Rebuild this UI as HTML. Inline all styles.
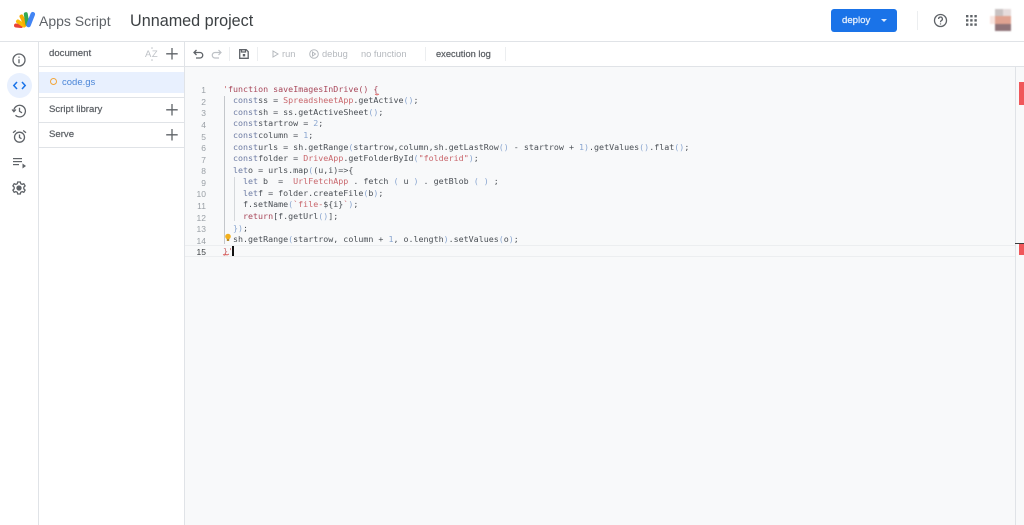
<!DOCTYPE html>
<html><head><meta charset="utf-8">
<style>
html,body{margin:0;padding:0;background:#fff}
#p{position:relative;width:1024px;height:525px;overflow:hidden;background:#fff;font-family:"Liberation Sans",sans-serif;color:#3c4043;filter:blur(.3px)}
.a{position:absolute;white-space:pre}
.b{position:absolute;background:#e0e3e7}
.l{position:absolute;left:0;font-family:"DejaVu Sans Mono",monospace;font-size:8.34px;line-height:12px;white-space:pre;color:#4a4f55}
.n{position:absolute;width:20px;text-align:right;left:186px;font-family:"Liberation Sans",sans-serif;font-size:8.5px;line-height:12px;color:#9aa0a6}
.k{color:#6d7ba3}.s{color:#c9666c}.p{color:#8aa6d0}.f{color:#a8475a}
.t{font-size:9.6px;color:#5f6368;-webkit-text-stroke:.25px #5f6368}
svg{position:absolute;overflow:visible}
</style></head><body><div id="p">

<!-- header -->
<svg style="left:14px;top:11px" width="22" height="18" viewBox="0 0 22 18" fill="none" stroke-linecap="round">
<path d="M2 14.500 L7 15" stroke="#ea4335" stroke-width="4"/>
<path d="M4 10.500 L10 14.500" stroke="#fbbc04" stroke-width="4"/>
<path d="M7.500 5.500 L11.500 13.500" stroke="#f9ab00" stroke-width="4"/>
<path d="M11.800 3.200 L13.300 13" stroke="#34a853" stroke-width="4"/>
<path d="M18.800 3.200 L14.500 14" stroke="#4285f4" stroke-width="4.600"/>
</svg>
<div class="a" style="left:39px;top:12px;font-size:14px;line-height:18px;color:#5f6368">Apps Script</div>
<div class="a" style="left:130px;top:11px;font-size:16.2px;line-height:20px;color:#3c4043">Unnamed project</div>
<div class="a" style="left:831px;top:9px;width:66px;height:23px;background:#1a73e8;border-radius:3px"></div>
<div class="a" style="left:842px;top:14px;font-size:9.600px;line-height:13px;color:#e3eefc;-webkit-text-stroke:.3px #e3eefc">deploy</div>
<div class="a" style="left:881px;top:19px;width:0;height:0;border-left:3.500px solid transparent;border-right:3.500px solid transparent;border-top:3.500px solid #e3eefc"></div>
<div class="b" style="left:917px;top:11px;width:1px;height:19px;background:#eceef0"></div>
<svg style="left:933px;top:13px" width="15" height="15" viewBox="0 0 15 15" fill="none" stroke="#5f6368" stroke-width="1.300"><circle cx="7.500" cy="7.500" r="6"/><path d="M5.600 6 A1.900 1.900 0 1 1 8.400 7.600 C7.700 8 7.500 8.400 7.500 9.200"/><path d="M7.500 10.400v1.100"/></svg>
<svg style="left:966px;top:15px" width="11" height="11" viewBox="0 0 11 11" fill="#5f6368"><rect x="0" y="0" width="2.400" height="2.400"/><rect x="4.200" y="0" width="2.400" height="2.400"/><rect x="8.400" y="0" width="2.400" height="2.400"/><rect x="0" y="4.200" width="2.400" height="2.400"/><rect x="4.200" y="4.200" width="2.400" height="2.400"/><rect x="8.400" y="4.200" width="2.400" height="2.400"/><rect x="0" y="8.400" width="2.400" height="2.400"/><rect x="4.200" y="8.400" width="2.400" height="2.400"/><rect x="8.400" y="8.400" width="2.400" height="2.400"/></svg>
<div class="a" style="left:990px;top:9px;width:21px;height:22px;filter:blur(.7px)">
<div class="a" style="left:5px;top:0;width:8px;height:7px;background:#c9c2c2"></div><div class="a" style="left:13px;top:0;width:8px;height:7px;background:#e6dcdc"></div>
<div class="a" style="left:0;top:7px;width:5px;height:8px;background:#f8e6e1"></div><div class="a" style="left:5px;top:7px;width:16px;height:8px;background:#e0a391"></div>
<div class="a" style="left:5px;top:15px;width:16px;height:7px;background:#8f7378"></div></div>
<div class="b" style="left:0;top:41px;width:1024px;height:1px"></div>

<!-- left rail -->
<div class="b" style="left:38px;top:42px;width:1px;height:483px"></div>
<div class="a" style="left:7px;top:73px;width:25px;height:25px;border-radius:50%;background:#e8f0fe"></div>
<svg style="left:12px;top:53px" width="14" height="14" viewBox="0 0 14 14" fill="none" stroke="#5f6368" stroke-width="1.300"><circle cx="7" cy="7" r="6"/><path d="M7 6.200v4M7 3.600v1.200"/></svg>
<svg style="left:12px;top:80px" width="15" height="11" viewBox="0 0 15 11" fill="none" stroke="#1a73e8" stroke-width="1.500"><path d="M5 2 1.800 5.500 5 9M10 2l3.200 3.500L10 9"/></svg>
<svg style="left:12px;top:104px" width="15" height="14" viewBox="0 0 15 14" fill="none" stroke="#5f6368" stroke-width="1.300"><path d="M1.800 7 A5.800 5.800 0 1 1 3.500 11.200"/><path d="M0 5.500 1.900 7.800 4 5.500" stroke-width="1.100"/><path d="M7.500 3.800V7.300l2.500 1.500"/></svg>
<svg style="left:12px;top:129px" width="15" height="15" viewBox="0 0 15 15" fill="none" stroke="#5f6368" stroke-width="1.300"><circle cx="7.500" cy="8.200" r="5"/><path d="M7.500 5.500v3l2 1.200M1 3.800 3.800 1.500M14 3.800 11.200 1.500"/></svg>
<svg style="left:13px;top:157px" width="14" height="12" viewBox="0 0 14 12" fill="#5f6368"><rect x="0" y="1" width="9" height="1.200"/><rect x="0" y="4" width="9" height="1.200"/><rect x="0" y="7" width="6" height="1.200"/><path d="M9.500 6.500v5l3.500-2.500z"/></svg>
<svg style="left:12px;top:181px" width="14" height="14" viewBox="0 0 14 14" fill="none" stroke="#5f6368" stroke-width="1.300"><path d="M5.700 1h2.600l.4 1.700 1.500.7 1.600-.7 1.300 2.200-1.300 1.200v1.800l1.300 1.200-1.300 2.200-1.600-.7-1.500.7L8.300 13H5.700l-.4-1.700-1.500-.7-1.600.7L.9 9.100l1.300-1.200V6.100L.9 4.900l1.300-2.200 1.600.7 1.500-.7z"/><circle cx="7" cy="7" r="2" fill="#5f6368"/></svg>

<!-- file panel -->
<div class="b" style="left:184px;top:42px;width:1px;height:483px"></div>
<div class="a t" style="left:49px;top:47px;line-height:13px">document</div>
<div class="a" style="left:145px;top:48px;font-size:9.500px;line-height:13px;color:#bdc1c6;letter-spacing:.6px">AZ</div>
<svg style="left:151px;top:47px" width="3" height="15" fill="#bdc1c6"><circle cx="1" cy="1" r=".8"/><circle cx="1" cy="13" r=".8"/></svg>
<svg style="left:166px;top:48px" width="12" height="12" stroke="#5f6368" stroke-width="1.300"><path d="M6 0v11.500M.2 5.800h11.500"/></svg>
<div class="b" style="left:39px;top:66px;width:145px;height:1px"></div>
<div class="a" style="left:39px;top:72px;width:145px;height:21px;background:#e8f0fe"></div>
<div class="a" style="left:49.500px;top:78px;width:5px;height:5px;border:1.300px solid #f2a63c;border-radius:50%"></div>
<div class="a" style="left:62px;top:76px;font-size:9.500px;line-height:13px;color:#4b86d8">code.gs</div>
<div class="b" style="left:39px;top:97px;width:145px;height:1px"></div>
<div class="a t" style="left:49px;top:103px;line-height:13px">Script library</div>
<svg style="left:166px;top:104px" width="12" height="12" stroke="#5f6368" stroke-width="1.300"><path d="M6 0v11.500M.2 5.800h11.500"/></svg>
<div class="b" style="left:39px;top:122px;width:145px;height:1px"></div>
<div class="a t" style="left:49px;top:128px;line-height:13px">Serve</div>
<svg style="left:166px;top:129px" width="12" height="12" stroke="#5f6368" stroke-width="1.300"><path d="M6 0v11.500M.2 5.800h11.500"/></svg>
<div class="b" style="left:39px;top:147px;width:145px;height:1px"></div>

<!-- toolbar -->
<svg style="left:193px;top:49px" width="11" height="10" fill="none" stroke="#5f6368" stroke-width="1.300"><path d="M1 3.500h6a2.700 2.700 0 0 1 0 5.500H3M3.500 1 1 3.500 3.500 6"/></svg>
<svg style="left:211px;top:49px" width="11" height="10" fill="none" stroke="#bdc1c6" stroke-width="1.200"><path d="M10 3.500H4a2.700 2.700 0 0 0 0 5.500h4M7.500 1 10 3.500 7.500 6"/></svg>
<div class="b" style="left:229px;top:47px;width:1px;height:14px;background:#eceef0"></div>
<svg style="left:239px;top:49px" width="10" height="10" fill="none" stroke="#5f6368" stroke-width="1.300"><path d="M.7.700h6.500l2 2v6.600H.700z"/><path d="M2.500 1v2h4V1"/><rect x="3.800" y="5" width="2.400" height="2.400" fill="#5f6368" stroke="none"/></svg>
<div class="b" style="left:257px;top:47px;width:1px;height:14px;background:#eceef0"></div>
<svg style="left:272px;top:50px" width="7" height="8" fill="none" stroke="#b5b9be" stroke-width="1"><path d="M1 1v6l5-3z"/></svg>
<div class="a" style="left:282px;top:48px;font-size:9.300px;line-height:13px;color:#b5b9be">run</div>
<svg style="left:309px;top:49px" width="10" height="10" fill="none" stroke="#b5b9be" stroke-width="1"><circle cx="5" cy="5" r="4.300"/><path d="M3.500 3v4l3-2z"/></svg>
<div class="a" style="left:322px;top:48px;font-size:9.300px;line-height:13px;color:#b5b9be">debug</div>
<div class="a" style="left:361px;top:48px;font-size:9.300px;line-height:13px;color:#b5b9be">no function</div>
<div class="b" style="left:425px;top:47px;width:1px;height:14px;background:#eceef0"></div>
<div class="a" style="left:436px;top:48px;font-size:9.300px;line-height:13px;color:#5f6368;-webkit-text-stroke:.25px #5f6368">execution log</div>
<div class="b" style="left:505px;top:47px;width:1px;height:14px;background:#eceef0"></div>
<div class="b" style="left:185px;top:66px;width:839px;height:1px"></div>

<!-- editor -->
<div class="a" style="left:185px;top:67px;width:839px;height:458px;background:#f8f9fa"></div>
<div class="b" style="left:1015px;top:67px;width:1px;height:458px"></div>
<div class="a" style="left:1019px;top:82px;width:5px;height:23px;background:#f0575a"></div>
<div class="a" style="left:1019px;top:243px;width:5px;height:12px;background:#f0575a"></div>
<div class="a" style="left:1015px;top:243px;width:9px;height:1px;background:#3c3c3c"></div>
<div class="a" style="left:185px;top:245px;width:830px;height:10px;border-top:1px solid #eceef0;border-bottom:1px solid #eceef0"></div>
<div class="b" style="left:224px;top:96px;width:1px;height:148px;background:#c4c7cb"></div>
<div class="b" style="left:234px;top:177px;width:1px;height:44px;background:#d5d8db"></div>

<div class="n" style="top:84px">1</div>
<div class="n" style="top:96px">2</div>
<div class="n" style="top:107px">3</div>
<div class="n" style="top:119px">4</div>
<div class="n" style="top:131px">5</div>
<div class="n" style="top:142px">6</div>
<div class="n" style="top:154px">7</div>
<div class="n" style="top:165px">8</div>
<div class="n" style="top:177px">9</div>
<div class="n" style="top:188px">10</div>
<div class="n" style="top:200px">11</div>
<div class="n" style="top:212px">12</div>
<div class="n" style="top:223px">13</div>
<div class="n" style="top:235px">14</div>
<div class="n" style="top:246px;color:#3c4043">15</div>

<div class="l" style="left:223px;top:83px"><span class="s">'</span><span class="f">function saveImagesInDrive() {</span></div>
<div class="l" style="left:233px;top:94px"><span class="k">const</span>ss = <span class="s">SpreadsheetApp</span>.getActive<span class="p">()</span>;</div>
<div class="l" style="left:233px;top:106px"><span class="k">const</span>sh = ss.getActiveSheet<span class="p">()</span>;</div>
<div class="l" style="left:233px;top:117px"><span class="k">const</span>startrow = <span class="p">2</span>;</div>
<div class="l" style="left:233px;top:129px"><span class="k">const</span>column = <span class="p">1</span>;</div>
<div class="l" style="left:233px;top:141px"><span class="k">const</span>urls = sh.getRange<span class="p">(</span>startrow,column,sh.getLastRow<span class="p">()</span> - startrow + <span class="p">1)</span>.getValues<span class="p">()</span>.flat<span class="p">()</span>;</div>
<div class="l" style="left:233px;top:152px"><span class="k">const</span>folder = <span class="s">DriveApp</span>.getFolderById<span class="p">(</span><span class="s">"folderid"</span><span class="p">)</span>;</div>
<div class="l" style="left:233px;top:164px"><span class="k">let</span>o = urls.map<span class="p">(</span>(u,i)=&gt;{</div>
<div class="l" style="left:243px;top:175px"><span class="k">let</span> b  =  <span class="s">UrlFetchApp</span> . fetch <span class="p">(</span> u <span class="p">)</span> . getBlob <span class="p">( )</span> ;</div>
<div class="l" style="left:243px;top:187px"><span class="k">let</span>f = folder.createFile<span class="p">(</span>b<span class="p">)</span>;</div>
<div class="l" style="left:243px;top:198px">f.setName<span class="p">(</span><span class="s">`file-</span>${i}<span class="s">`</span><span class="p">)</span>;</div>
<div class="l" style="left:243px;top:210px"><span class="f">return</span>[f.getUrl<span class="p">()</span>];</div>
<div class="l" style="left:233px;top:222px"><span class="p">})</span>;</div>
<div class="l" style="left:233px;top:233px">sh.getRange<span class="p">(</span>startrow, column + <span class="p">1</span>, o.length<span class="p">)</span>.setValues<span class="p">(</span>o<span class="p">)</span>;</div>
<div class="l" style="left:223px;top:245px"><span class="s">}</span><span class="s">'</span></div>

<svg style="left:224px;top:233px" width="8" height="10"><circle cx="4" cy="3.500" r="2.800" fill="#f2b01e"/><rect x="2.800" y="6" width="2.400" height="2" fill="#b58a2a"/></svg>
<div class="a" style="left:232px;top:246px;width:1.500px;height:10px;background:#111"></div>
<svg style="left:361px;top:88px" width="20" height="8" fill="none" stroke="#d9534f" stroke-width=".8"><path d="M14 6l2 1 2-1"/></svg>
<svg style="left:222px;top:253px" width="10" height="4" fill="none" stroke="#d9534f" stroke-width=".8"><path d="M1 2l2-1 2 1 2-1"/></svg>
</div></body></html>
